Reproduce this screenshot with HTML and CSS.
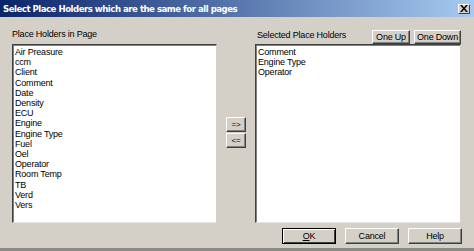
FILE: index.html
```html
<!DOCTYPE html>
<html>
<head>
<meta charset="utf-8">
<link rel="stylesheet" href="styles.css">
</head>
<body>
<div class="window">
  <div class="titlebar">
    <span class="title">Select Place Holders which are the same for all pages</span>
    <span class="close">
      <svg width="8" height="7" viewBox="0 0 8 7"><path d="M0 0h2l2 2.5 2-2.5h2l-3 3.5 3 3.5h-2l-2-2.5-2 2.5h-2l3-3.5z" fill="#000"/></svg>
    </span>
  </div>
  <div class="content">
    <div class="col">
      <div class="head"><span class="label">Place Holders in Page</span></div>
      <div class="listbox">
        <div>Air Preasure</div><div>ccm</div><div>Client</div><div>Comment</div><div>Date</div><div>Density</div><div>ECU</div><div>Engine</div><div>Engine Type</div><div>Fuel</div><div>Oel</div><div>Operator</div><div>Room Temp</div><div>TB</div><div>Verd</div><div>Vers</div>
      </div>
    </div>
    <div class="mid">
      <button class="btn small">=&gt;</button>
      <button class="btn small">&lt;=</button>
    </div>
    <div class="col right">
      <div class="head">
        <span class="label">Selected Place Holders</span>
        <span class="headbtns">
          <button class="btn up">One Up</button>
          <button class="btn down">One Down</button>
        </span>
      </div>
      <div class="listbox">
        <div>Comment</div><div>Engine Type</div><div>Operator</div>
      </div>
    </div>
  </div>
  <div class="footer">
    <button class="btn big default"><u>O</u>K</button>
    <button class="btn big">Cancel</button>
    <button class="btn big">Help</button>
  </div>
</div>
</body>
</html>
```
FILE: styles.css
```css
html, body {
  margin: 0;
  padding: 0;
  background: #d4d0c8;
}
.window {
  width: 474px;
  height: 251px;
  box-sizing: border-box;
  background: #d4d0c8;
  border-bottom: 3px solid #8c8a84;
  font-family: "Liberation Sans", Arial, sans-serif;
  font-size: 9px;
  letter-spacing: -0.2px;
  color: #000;
  display: flex;
  flex-direction: column;
}
.titlebar {
  height: 17px;
  background: linear-gradient(to right, #0a246a, #a6caf0);
  display: flex;
  align-items: center;
  justify-content: space-between;
  padding: 0 4px 0 3px;
}
.title {
  color: #fff;
  font-family: "DejaVu Sans", sans-serif;
  font-weight: bold;
  font-size: 8.6px;
  letter-spacing: -0.5px;
}
.close {
  width: 12px;
  height: 10px;
  box-sizing: border-box;
  background: #d4d0c8;
  border: 1px solid;
  border-color: #fff #404040 #404040 #fff;
  display: flex;
  align-items: center;
  justify-content: center;
}
.content {
  display: flex;
  padding: 12px 13px 0 12px;
  height: 194px;
}
.col {
  width: 205px;
  display: flex;
  flex-direction: column;
}
.col.right {
  width: 206px;
}
.head {
  height: 15px;
  display: flex;
  align-items: center;
  justify-content: space-between;
}
.label {
  align-self: flex-start;
  line-height: 10px;
  padding-top: 0;
}
.right .label {
  padding-left: 2px;
  padding-top: 1px;
}
.headbtns {
  display: flex;
  gap: 4px;
}
.listbox {
  flex: 1;
  background: #fff;
  border: 1px solid;
  border-color: #404040 #d4d0c8 #e8e6e2 #404040;
  box-shadow: inset 1px 1px 0 #808080;
  padding: 2px 2px;
  line-height: 10.2px;
}
.mid {
  width: 38px;
  display: flex;
  flex-direction: column;
  align-items: center;
  padding-top: 88px;
  gap: 1px;
  box-sizing: border-box;
}
.btn {
  font-family: "Liberation Sans", Arial, sans-serif;
  font-size: 9px;
  letter-spacing: -0.2px;
  white-space: nowrap;
  color: #000;
  background: #d4d0c8;
  border: 1px solid;
  border-color: #fff #404040 #404040 #fff;
  box-shadow: inset -1px -1px 0 #808080;
  padding: 0;
  margin: 0;
  box-sizing: border-box;
  display: flex;
  align-items: center;
  justify-content: center;
}
.small {
  width: 20px;
  height: 15px;
  font-size: 8px;
}
.up {
  width: 38px;
  height: 14px;
}
.down {
  width: 47px;
  height: 14px;
}
.footer {
  display: flex;
  justify-content: flex-end;
  gap: 9px;
  padding: 5px 12px 0 0;
}
.big {
  width: 54px;
  height: 16px;
}
.default {
  border: 1px solid #000;
  box-shadow: inset 1px 1px 0 #fff, inset -1px -1px 0 #404040;
}
u {
  text-decoration: underline;
}
```
